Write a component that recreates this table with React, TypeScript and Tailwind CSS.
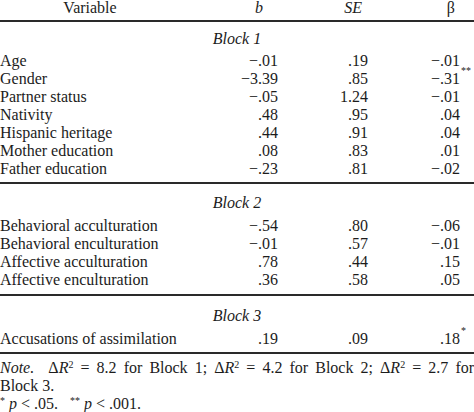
import React from 'react';

type Row = { label: string; b: string; se: string; beta: string; sig?: string };

const blocks: { title: string; rows: Row[] }[] = [
  {
    title: 'Block 1',
    rows: [
      { label: 'Age', b: '−.01', se: '.19', beta: '−.01' },
      { label: 'Gender', b: '−3.39', se: '.85', beta: '−.31', sig: '**' },
      { label: 'Partner status', b: '−.05', se: '1.24', beta: '−.01' },
      { label: 'Nativity', b: '.48', se: '.95', beta: '.04' },
      { label: 'Hispanic heritage', b: '.44', se: '.91', beta: '.04' },
      { label: 'Mother education', b: '.08', se: '.83', beta: '.01' },
      { label: 'Father education', b: '−.23', se: '.81', beta: '−.02' },
    ],
  },
  {
    title: 'Block 2',
    rows: [
      { label: 'Behavioral acculturation', b: '−.54', se: '.80', beta: '−.06' },
      { label: 'Behavioral enculturation', b: '−.01', se: '.57', beta: '−.01' },
      { label: 'Affective acculturation', b: '.78', se: '.44', beta: '.15' },
      { label: 'Affective enculturation', b: '.36', se: '.58', beta: '.05' },
    ],
  },
  {
    title: 'Block 3',
    rows: [{ label: 'Accusations of assimilation', b: '.19', se: '.09', beta: '.18', sig: '*' }],
  },
];

// gaps tuned per block to follow the printed table
const blockGaps = [
  { top: 'mt-[8px]', rows: 'mt-[4px]', rule: 'mt-[4px]' },
  { top: 'mt-[10px]', rows: 'mt-[5px]', rule: 'mt-[5px]' },
  { top: 'mt-[11px]', rows: 'mt-[5px]', rule: 'mt-[4px]' },
];

function Rule({ className = '' }: { className?: string }) {
  return <div className={`h-[2px] w-full bg-[#2a2a2a] ${className}`} />;
}

function DataRow({ row }: { row: Row }) {
  return (
    <div className="grid grid-cols-[200px_78px_90px_92px] h-[18px]">
      <div className="whitespace-nowrap">{row.label}</div>
      <div className="text-right">{row.b}</div>
      <div className="text-right">{row.se}</div>
      <div className="text-right">
        <span className="relative">
          {row.beta}
          {row.sig && (
            <span className="absolute left-full top-[-4px] pl-[1px] text-[10px] leading-none">{row.sig}</span>
          )}
        </span>
      </div>
    </div>
  );
}

function DeltaR({ value }: { value: string }) {
  return (
    <>
      Δ<i>R</i>
      <sup className="text-[10px] leading-none">2</sup> = {value}
    </>
  );
}

export default function App() {
  return (
    <div
      className="w-[474px] h-[412px] overflow-hidden bg-white text-[#1c1c1c] text-[16px] leading-[18px]"
      style={{ fontFamily: '"Liberation Serif", "Times New Roman", serif' }}
    >
      {/* Header */}
      <div className="grid grid-cols-[180px_98px_90px_92px] h-[18px] mt-[-1px]">
        <div className="text-center">Variable</div>
        <div className="text-right pr-[15px] italic">b</div>
        <div className="text-right pr-[6px] italic">SE</div>
        <div className="text-right pr-[5px]">β</div>
      </div>
      <Rule className="mt-[3px]" />

      {blocks.map((block, i) => (
        <div key={block.title}>
          <div className={`h-[18px] text-center italic ${blockGaps[i].top}`}>{block.title}</div>
          <div className={blockGaps[i].rows}>
            {block.rows.map((r) => (
              <DataRow key={r.label} row={r} />
            ))}
          </div>
          <Rule className={blockGaps[i].rule} />
        </div>
      ))}

      {/* Note */}
      <div className="mt-[5px]">
        <div className="text-justify [text-align-last:justify] whitespace-nowrap h-[18px]">
          <i>Note.</i>&nbsp; <DeltaR value="8.2" /> for Block 1; <DeltaR value="4.2" /> for Block 2;{' '}
          <DeltaR value="2.7" /> for
        </div>
        <div className="h-[18px]">Block 3.</div>
        <div className="h-[18px] whitespace-nowrap">
          <sup className="text-[10px] leading-none">*</sup> <i>p</i> &lt; .05.&nbsp;&nbsp;{' '}
          <sup className="text-[10px] leading-none">**</sup> <i>p</i> &lt; .001.
        </div>
      </div>
    </div>
  );
}
